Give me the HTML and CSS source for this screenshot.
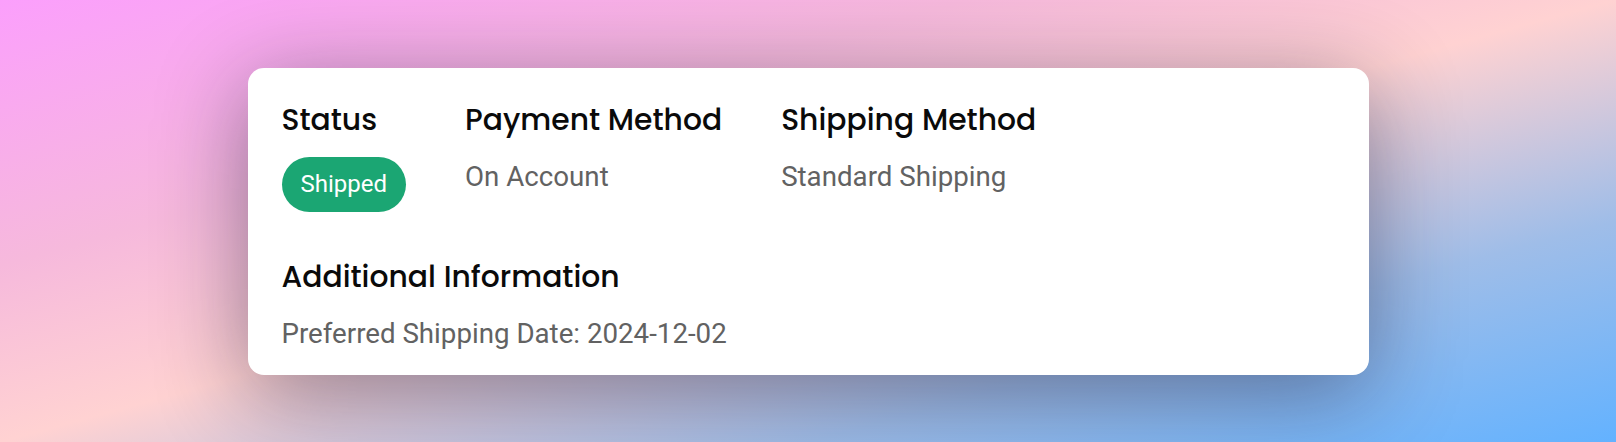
FILE: index.html
```html
<!DOCTYPE html>
<html lang="en">
<head>
<meta charset="utf-8">
<title>Order Details</title>
<link rel="stylesheet" href="styles.css">
</head>
<body>
<main class="stage">
  <section class="card">
    <div class="row">
      <div class="field">
        <h3 class="label">Status</h3>
        <span class="badge">Shipped</span>
      </div>
      <div class="field">
        <h3 class="label">Payment Method</h3>
        <p class="value">On Account</p>
      </div>
      <div class="field">
        <h3 class="label">Shipping Method</h3>
        <p class="value">Standard Shipping</p>
      </div>
    </div>
    <div class="extra">
      <h3 class="label">Additional Information</h3>
      <p class="value">Preferred Shipping Date: 2024-12-02</p>
    </div>
  </section>
</main>
</body>
</html>
```

FILE: styles.css
```css
html, body {
  margin: 0;
  padding: 0;
}

body {
  width: 1616px;
  height: 442px;
  overflow: hidden;
  background: linear-gradient(to bottom right, #fb9ffc 0%, #f6b9dc 30%, #ffd2d2 50%, #9fbde8 75%, #63b2ff 100%);
  font-family: Roboto, "Liberation Sans", sans-serif;
}

.stage {
  height: 442px;
  display: flex;
  align-items: center;
  justify-content: center;
}

.card {
  box-sizing: border-box;
  width: 1121px;
  padding: 32px 34px 21px 34px;
  background: #ffffff;
  border-radius: 16px;
  box-shadow: 0 18px 90px rgba(20, 20, 50, 0.45);
}

.row {
  display: flex;
  gap: 59px;
}

.field {
  display: flex;
  flex-direction: column;
  align-items: flex-start;
}

.label {
  margin: 0 0 17px 0;
  font-family: Poppins, Inter, "Noto Sans", sans-serif;
  font-weight: 500;
  font-size: 29.8px;
  line-height: 40px;
  color: #0a0a0a;
  letter-spacing: 0;
}

.value {
  margin: 0;
  font-family: Roboto, "Liberation Sans", sans-serif;
  font-size: 27.7px;
  line-height: 40px;
  color: #626262;
}

.badge {
  display: inline-block;
  height: 55px;
  line-height: 54px;
  padding: 0 19px;
  border-radius: 999px;
  background: #1ba673;
  color: #ffffff;
  font-family: Roboto, "Liberation Sans", sans-serif;
  font-size: 24px;
}

.extra {
  margin-top: 45px;
}

.extra .label {
  margin-bottom: 17px;
}
```
